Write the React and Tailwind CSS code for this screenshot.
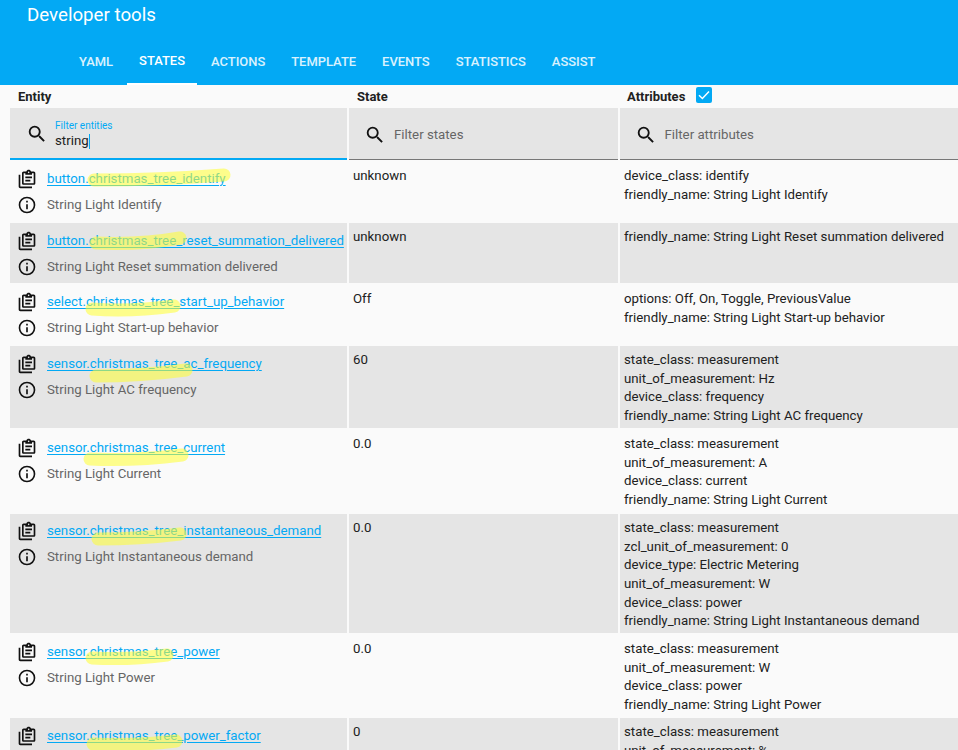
const magnify = "M9.5,3A6.5,6.5 0 0,1 16,9.5C16,11.11 15.41,12.59 14.44,13.73L14.71,14H15.5L20.5,19L19,20.5L14,15.5V14.71L13.73,14.44C12.59,15.41 11.11,16 9.5,16A6.5,6.5 0 0,1 3,9.5A6.5,6.5 0 0,1 9.5,3M9.5,5C7,5 5,7 5,9.5C5,12 7,14 9.5,14C12,14 14,12 14,9.5C14,7 12,5 9.5,5Z"
const info = "M11,9H13V7H11M12,20C7.59,20 4,16.41 4,12C4,7.59 7.59,4 12,4C16.41,4 20,7.59 20,12C20,16.41 16.41,20 12,20M12,2A10,10 0 0,0 2,12A10,10 0 0,0 12,22A10,10 0 0,0 22,12A10,10 0 0,0 12,2M11,17H13V11H11V17Z"
const clipboard = "M4 7V21H18V23H4C2.9 23 2 22.1 2 21V7H4M20 3C21.1 3 22 3.9 22 5V17C22 18.1 21.1 19 20 19H8C6.9 19 6 18.1 6 17V5C6 3.9 6.9 3 8 3H11.18C11.6 1.84 12.7 1 14 1C15.3 1 16.4 1.84 16.82 3H20M14 3C13.45 3 13 3.45 13 4C13 4.55 13.45 5 14 5C14.55 5 15 4.55 15 4C15 3.45 14.55 3 14 3M10 7V5H8V17H20V5H18V7H10M18 11H10V9H18V11M16 15H10V13H16V15Z"

function Icon({ d, className }) {
    return (
        <svg viewBox="0 0 24 24" className={className} fill="currentColor">
            <path d={d} />
        </svg>
    )
}

const tabs = ["YAML", "STATES", "ACTIONS", "TEMPLATE", "EVENTS", "STATISTICS", "ASSIST"]

const rows = [
    { id: "button.christmas_tree_identify", name: "String Light Identify", state: "unknown", h: "h-[63px]", pt: "pt-[6px]", attrs: ["device_class: identify", "friendly_name: String Light Identify"] },
    { id: "button.christmas_tree_reset_summation_delivered", name: "String Light Reset summation delivered", state: "unknown", h: "h-[60px]", pt: "pt-[5px]", attrs: ["friendly_name: String Light Reset summation delivered"] },
    { id: "select.christmas_tree_start_up_behavior", name: "String Light Start-up behavior", state: "Off", h: "h-[63px]", pt: "pt-[6px]", attrs: ["options: Off, On, Toggle, PreviousValue", "friendly_name: String Light Start-up behavior"] },
    { id: "sensor.christmas_tree_ac_frequency", name: "String Light AC frequency", state: "60", h: "h-[82px]", pt: "pt-[5px]", attrs: ["state_class: measurement", "unit_of_measurement: Hz", "device_class: frequency", "friendly_name: String Light AC frequency"] },
    { id: "sensor.christmas_tree_current", name: "String Light Current", state: "0.0", h: "h-[86px]", pt: "pt-[7px]", attrs: ["state_class: measurement", "unit_of_measurement: A", "device_class: current", "friendly_name: String Light Current"] },
    { id: "sensor.christmas_tree_instantaneous_demand", name: "String Light Instantaneous demand", state: "0.0", h: "h-[119px]", pt: "pt-[4px]", attrs: ["state_class: measurement", "zcl_unit_of_measurement: 0", "device_type: Electric Metering", "unit_of_measurement: W", "device_class: power", "friendly_name: String Light Instantaneous demand"] },
    { id: "sensor.christmas_tree_power", name: "String Light Power", state: "0.0", h: "h-[85px]", pt: "pt-[6px]", attrs: ["state_class: measurement", "unit_of_measurement: W", "device_class: power", "friendly_name: String Light Power"] },
    { id: "sensor.christmas_tree_power_factor", name: "String Light Power factor", state: "0", h: "h-[85px]", pt: "pt-[5px]", attrs: ["state_class: measurement", "unit_of_measurement: %", "device_class: power_factor", "friendly_name: String Light Power factor"] },
]

// marker strokes someone drew over the screenshot, in page coordinates
const marks = [
    "M94 180 Q160 180 224 175",
    "M96 243 Q140 245 180 238",
    "M92 309 Q130 312 174 306",
    "M96 376 Q140 376 186 370",
    "M90 459 Q135 461 182 455",
    "M98 539 Q140 539 180 534",
    "M92 658 Q130 660 167 655",
    "M93 744 Q135 746 176 741",
]

function Filter({ label, active, value, className }) {
    return (
        <div className={`h-[52px] bg-[#e5e5e5] flex items-center ${active ? "border-b-2 border-[#03a9f4] pt-[1px]" : "border-b border-[#777] pt-[3px]"} ${className}`}>
            <Icon d={magnify} className="w-[22px] h-[22px] text-[#111] shrink-0" />
            {active ? (
                <div className="ml-[7px] mt-[3px]">
                    <div className="text-[10px] leading-[12px] text-[#03a9f4]">{label}</div>
                    <div className="text-[13.25px] leading-[18px] text-[#212121] flex items-center">
                        {value}
                        <span className="w-px h-[15px] bg-[#03a9f4]" />
                    </div>
                </div>
            ) : (
                <span className="ml-[8px] text-[13.25px] text-[#666]">{label}</span>
            )}
        </div>
    )
}

function Row({ row, index }) {
    const gray = index % 2 === 1
    const bg = gray ? "bg-[#e5e5e5]" : ""
    return (
        <div className={`grid grid-cols-[337px_268.5px_339px] gap-x-[2px] shrink-0 ${row.h}`}>
            <div className={`${bg} ${row.pt} pl-[7px]`}>
                <div className="flex items-center h-[26px]">
                    <Icon d={clipboard} className="w-[20px] h-[20px] text-[#111] shrink-0" />
                    <a className="ml-[10px] text-[13.25px] text-[#03a9f4] underline underline-offset-[2px] whitespace-nowrap">{row.id}</a>
                </div>
                <div className="flex items-center h-[26px]">
                    <Icon d={info} className="w-[20px] h-[20px] text-[#111] shrink-0" />
                    <span className="ml-[10px] text-[13.25px] text-[#666]">{row.name}</span>
                </div>
            </div>
            <div className={`${bg} ${gray ? "pt-[5px]" : "pt-[7px]"} pl-[4px] text-[13.25px] leading-[18.67px] text-[#212121]`}>{row.state}</div>
            <div className={`${bg} ${gray ? "pt-[5px]" : "pt-[7px]"} pl-[4.5px] text-[13.25px] leading-[18.67px] text-[#212121] whitespace-nowrap`}>
                {row.attrs.map((a) => <div key={a}>{a}</div>)}
            </div>
        </div>
    )
}

export default function App() {
    return (
        <div className="relative w-[958px] h-[750px] overflow-hidden bg-[#fafafa] font-['Roboto',sans-serif]">
            <header className="h-[85px] bg-[#03a9f4] text-white flex flex-col">
                <h1 className="pl-[27px] h-[30px] text-[18.7px] leading-[30px]">Developer tools</h1>
                <nav className="flex pl-[67px] mt-[8px] h-[47px]">
                    {tabs.map((t) => (
                        <div key={t} className={`px-[12px] mr-[2px] flex items-center pt-[1px] text-[12.95px] font-medium ${t === "STATES" ? "border-b-2 border-white" : "text-white/85"}`}>
                            {t}
                        </div>
                    ))}
                </nav>
            </header>

            <div className="pl-[10px] flex flex-col">
                <div className="grid grid-cols-[337px_268.5px_339px] gap-x-[2px] h-[23px] text-[13px] font-bold text-[#212121] items-center">
                    <div className="pl-[8px]">Entity</div>
                    <div className="pl-[8px]">State</div>
                    <div className="pl-[7.5px] flex items-center">
                        Attributes
                        <span className="ml-[11px] w-[16px] h-[16px] rounded-[2px] bg-[#03a9f4] flex items-center justify-center -mt-[4px]">
                            <svg viewBox="0 0 16 16" className="w-[16px] h-[16px]" fill="none" stroke="white" strokeWidth="1.5">
                                <path d="M3 8.2 L6.4 11.5 L13 4.5" />
                            </svg>
                        </span>
                    </div>
                </div>
                <div className="grid grid-cols-[337px_268.5px_339px] gap-x-[2px]">
                    <Filter label="Filter entities" value="string" active className="pl-[16px]" />
                    <Filter label="Filter states" className="pl-[15px]" />
                    <Filter label="Filter attributes" className="pl-[15px]" />
                </div>
                {rows.map((row, i) => <Row key={row.id} row={row} index={i} />)}
            </div>

            <svg className="absolute inset-0 w-[958px] h-[750px] pointer-events-none" viewBox="0 0 958 750" fill="none">
                {marks.map((d) => <path key={d} d={d} stroke="#ffff30" strokeOpacity="0.55" strokeWidth="13" strokeLinecap="round" />)}
            </svg>
        </div>
    )
}
